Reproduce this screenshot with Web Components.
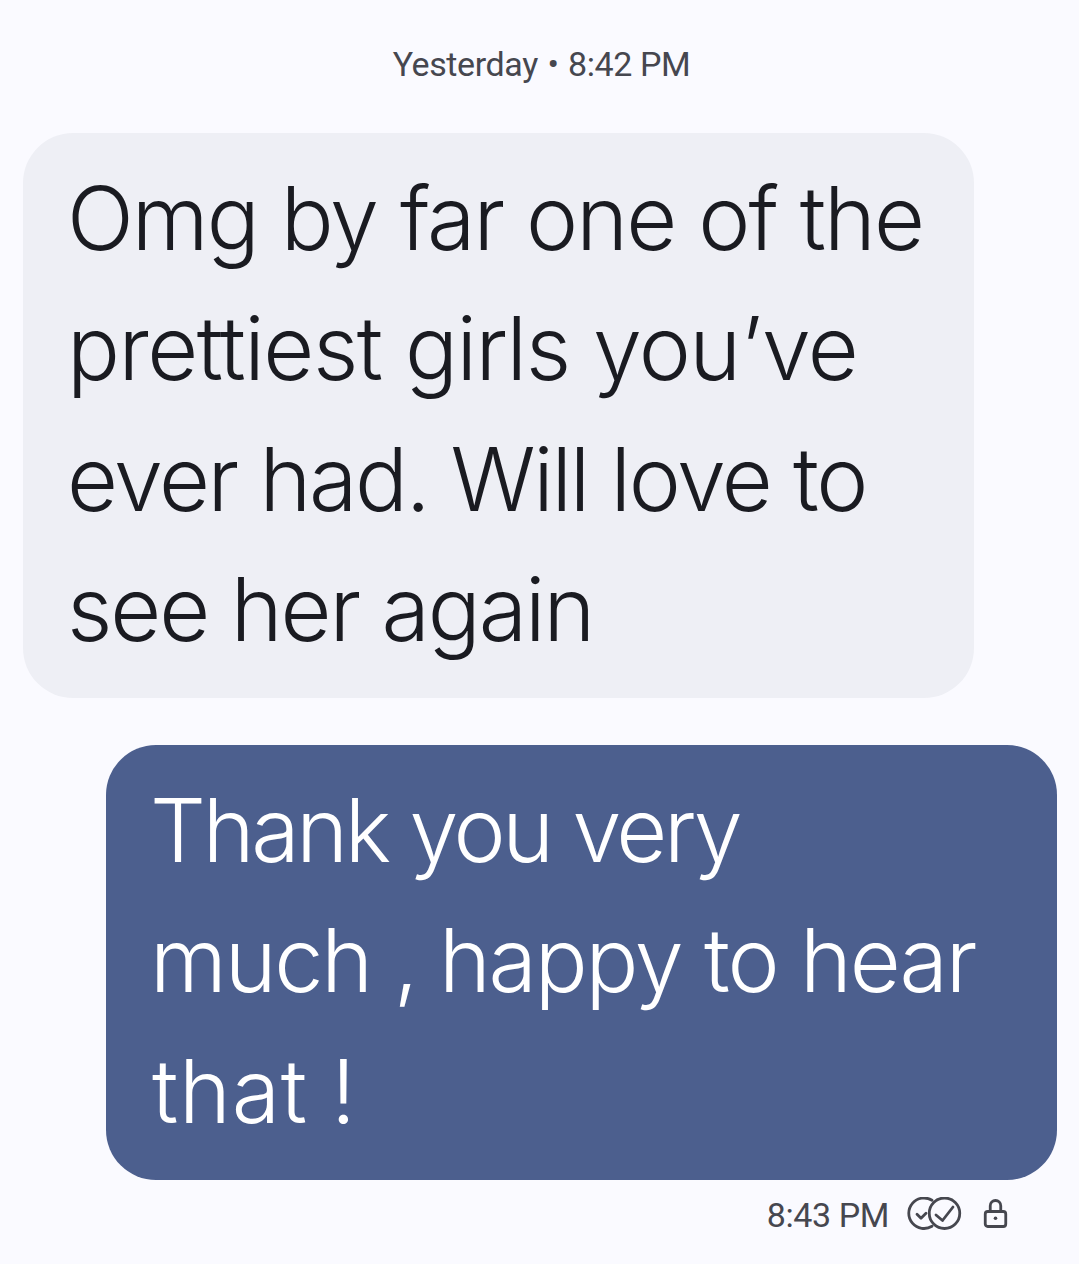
<!DOCTYPE html>
<html lang="en">
<head>
<meta charset="utf-8">
<title>Messages</title>
<style>
  html, body { margin: 0; background: #fafaff; }
  body { font-family: Roboto, "Noto Sans", sans-serif; }
</style>
</head>
<body>
<message-thread>
  <time-stamp>Yesterday <span style="margin: 0 1.5px">•</span> 8:42 PM</time-stamp>
  <chat-bubble>
    <bubble-line style="letter-spacing: -1.9px">Omg by far one of the</bubble-line>
    <bubble-line style="letter-spacing: -1.47px">prettiest girls you’ve</bubble-line>
    <bubble-line style="letter-spacing: -2.3px">ever had. Will love to</bubble-line>
    <bubble-line style="letter-spacing: -2.1px">see her again</bubble-line>
  </chat-bubble>
  <chat-bubble outgoing>
    <bubble-line style="letter-spacing: -3.27px">Thank you very</bubble-line>
    <bubble-line style="letter-spacing: -2.15px">much , happy to hear</bubble-line>
    <bubble-line style="letter-spacing: 0.8px; word-spacing: -2.5px; padding-left: 2px">that !</bubble-line>
  </chat-bubble>
  <message-status>8:43 PM</message-status>
</message-thread>
<script>
  class MessageThread extends HTMLElement {
    constructor() {
      super()
      this.attachShadow({ mode: 'open' })
      this.shadowRoot.innerHTML = `
        <style>
          :host { display: flex; flex-direction: column; width: 1079px; height: 1264px; box-sizing: border-box; padding: 0 22px 0 23px; overflow: hidden; }
        </style>
        <slot></slot>`
    }
  }

  class TimeStamp extends HTMLElement {
    constructor() {
      super()
      this.attachShadow({ mode: 'open' })
      this.shadowRoot.innerHTML = `
        <style>
          :host { display: block; height: 133px; box-sizing: border-box; padding: 43px 0 0 3px; text-align: center; color: #46474f; font-size: 34px; line-height: 42px; font-weight: 400; letter-spacing: -0.4px; }
        </style>
        <slot></slot>`
    }
  }

  class ChatBubble extends HTMLElement {
    constructor() {
      super()
      this.attachShadow({ mode: 'open' })
      this.shadowRoot.innerHTML = `
        <style>
          :host { display: block; box-sizing: border-box; width: 951px; padding: 20px 20px 24px 44px; border-radius: 50px; background: #eeeff5; color: #1a1b21; font-family: Inter, Roboto, sans-serif; font-size: 88px; line-height: 130.25px; font-weight: 340; white-space: nowrap; }
          :host([outgoing]) { align-self: flex-end; margin-top: 47px; background: #4c5f8e; color: #fff; }
        </style>
        <slot></slot>`
    }
  }

  // one line of a bubble, the lines are broken by hand
  class BubbleLine extends HTMLElement {
    constructor() {
      super()
      this.attachShadow({ mode: 'open' })
      this.shadowRoot.innerHTML = `
        <style>
          :host { display: block; }
        </style>
        <slot></slot>`
    }
  }

  class MessageStatus extends HTMLElement {
    constructor() {
      super()
      this.attachShadow({ mode: 'open' })
      this.shadowRoot.innerHTML = `
        <style>
          :host { display: flex; align-items: center; justify-content: flex-end; height: 68px; padding-right: 49px; color: #46474f; font-size: 34px; letter-spacing: -0.4px; }
          .time { padding-top: 2px; }
          .ticks { width: 56px; height: 34px; margin-left: 17px; }
          .lock { width: 26px; height: 32px; margin-left: 20px; }
          svg { fill: none; stroke: #46474f; stroke-width: 2.800; stroke-linecap: round; stroke-linejoin: round; }
        </style>
        <span class="time"><slot></slot></span>
        <svg class="ticks" viewBox="0 0 56 34" aria-hidden="true">
          <path d="M26 3.250A15.250 15.250 0 1 0 26 29.250"/>
          <path d="M11 17.250l4 4 5-5"/>
          <circle cx="38.500" cy="16.250" r="15.250"/>
          <path d="M30 18l6.500 5.500L47 10"/>
        </svg>
        <svg class="lock" viewBox="0 0 26 32" aria-hidden="true">
          <rect x="3.250" y="13.500" width="20.500" height="15" rx="2.500"/>
          <path d="M8.250 13.500V7.750a5.250 5.250 0 0 1 10.500 0V13.500"/>
          <circle cx="13.500" cy="20.250" r="1.800" fill="#46474f" stroke="none"/>
        </svg>`
    }
  }

  customElements.define('message-thread', MessageThread)
  customElements.define('time-stamp', TimeStamp)
  customElements.define('chat-bubble', ChatBubble)
  customElements.define('bubble-line', BubbleLine)
  customElements.define('message-status', MessageStatus)
</script>
</body>
</html>
